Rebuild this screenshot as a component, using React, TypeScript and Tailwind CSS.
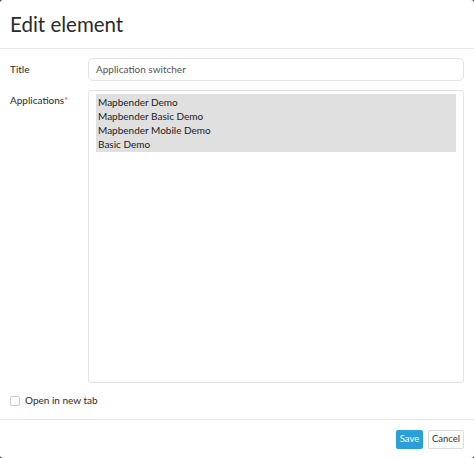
import React from "react";

export default function App() {
  const apps = ["Mapbender Demo", "Mapbender Basic Demo", "Mapbender Mobile Demo", "Basic Demo"];
  return (
    <div className="w-[474px] h-[458px] bg-[#3a3a3a]" style={{ fontFamily: "Lato, sans-serif" }}>
      <div className="w-full h-full bg-white rounded-[3px] flex flex-col">
        <div className="h-[49px] border-b border-[#e5e5e5] flex items-center px-[10px]">
          <h1 className="text-[20.5px] text-[#2b2b2b] leading-none mt-[1px]">Edit element</h1>
        </div>
        <div className="flex-1 px-[10px] pt-[9px] flex flex-col">
          <div className="flex items-center h-[23px]">
            <label className="w-[78px] text-[10px] text-[#2b2b2b]">Title</label>
            <div className="flex-1 h-[23px] border border-[#e3e3e3] rounded-[5px] flex items-center px-[7px] text-[10px] text-[#555]">
              Application switcher
            </div>
          </div>
          <div className="flex mt-[9px]">
            <label className="w-[78px] text-[10px] text-[#2b2b2b] pt-[3px]">
              Applications<span className="text-[#d9534f]">*</span>
            </label>
            <div className="flex-1 h-[293px] border border-[#e3e3e3] rounded-[3px] pt-[3px] px-[7px]">
              <div className="bg-[#e0e0e0] py-[1px]">
                {apps.map((a) => (
                  <div key={a} className="h-[14px] leading-[14px] text-[10px] text-[#1a1a1a] px-[2px]">
                    {a}
                  </div>
                ))}
              </div>
            </div>
          </div>
          <div className="flex items-center mt-[12px] h-[11px]">
            <span className="w-[10px] h-[10px] border border-[#ccc] rounded-[2px] mr-[5px]" />
            <span className="text-[10px] text-[#2b2b2b]">Open in new tab</span>
          </div>
        </div>
        <div className="h-[39px] border-t border-[#e5e5e5] flex items-center justify-end gap-[5px] px-[10px] mt-[12px]">
          <button className="h-[19px] w-[27px] bg-[#2a9fd8] text-white text-[9.5px] rounded-[2px]">Save</button>
          <button className="h-[19px] w-[36px] bg-white border border-[#ddd] text-[#333] text-[9.5px] rounded-[2px]">Cancel</button>
        </div>
      </div>
    </div>
  );
}
